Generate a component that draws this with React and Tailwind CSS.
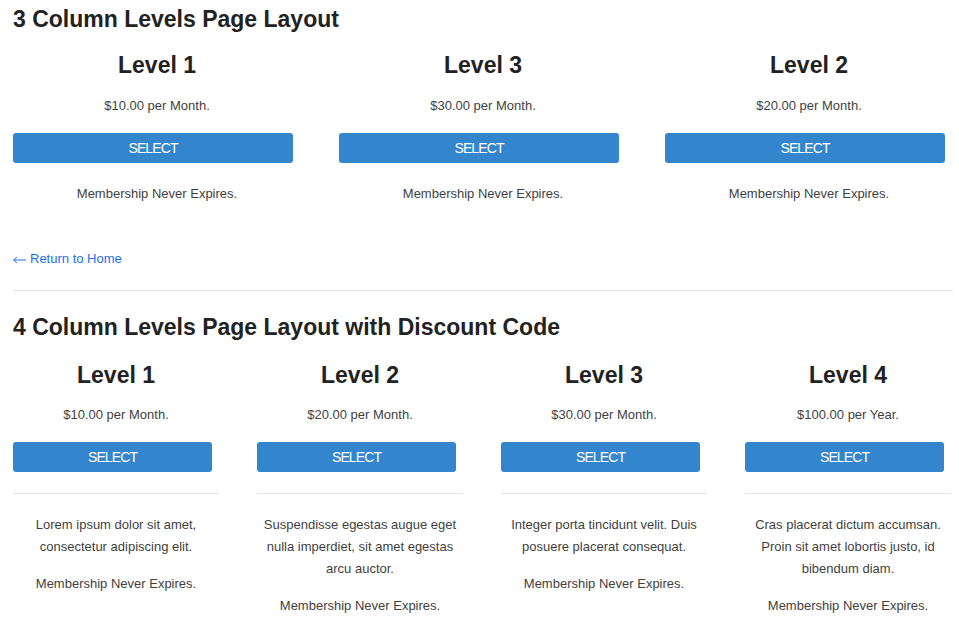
import React from 'react';

const threeCol = [
  { name: 'Level 1', price: '$10.00 per Month.' },
  { name: 'Level 3', price: '$30.00 per Month.' },
  { name: 'Level 2', price: '$20.00 per Month.' },
];

const fourCol = [
  { name: 'Level 1', price: '$10.00 per Month.', desc: ['Lorem ipsum dolor sit amet,', 'consectetur adipiscing elit.'] },
  { name: 'Level 2', price: '$20.00 per Month.', desc: ['Suspendisse egestas augue eget', 'nulla imperdiet, sit amet egestas', 'arcu auctor.'] },
  { name: 'Level 3', price: '$30.00 per Month.', desc: ['Integer porta tincidunt velit. Duis', 'posuere placerat consequat.'] },
  { name: 'Level 4', price: '$100.00 per Year.', desc: ['Cras placerat dictum accumsan.', 'Proin sit amet lobortis justo, id', 'bibendum diam.'] },
];

const SelectButton = ({ className = '' }) => (
  <button type="button" className={`h-[30px] rounded-[3px] bg-[#3386cd] text-[14px] tracking-[-0.9px] text-white ${className}`}>SELECT</button>
);

const App = () => (
  <div className="min-h-screen bg-white pl-[13px] text-[#3f3f3f] font-['Liberation_Sans',Arial,sans-serif]">
    <div className="w-[940px]">
      <h1 className="pt-[5px] text-[23px] font-bold leading-[28px] text-[#222]">3 Column Levels Page Layout</h1>

      <div className="mt-[18px] flex gap-[38px]">
        {threeCol.map((level) => (
          <div key={level.name} className="flex w-[288px] flex-col items-center text-center">
            <h2 className="text-[23px] font-bold leading-[28px] text-[#222]">{level.name}</h2>
            <p className="mt-[17px] text-[13px] leading-[20px]">{level.price}</p>
            <SelectButton className="mt-[17px] w-[280px] self-start" />
            <p className="mt-[21px] text-[13px] leading-[20px]">Membership Never Expires.</p>
          </div>
        ))}
      </div>

      <a href="#" className="mt-[45px] flex items-center gap-[4px] text-[13px] leading-[20px] text-[#2370ee]">
        <svg width="13" height="8" viewBox="0 0 13 8" fill="none" stroke="currentColor" strokeWidth="1" className="mt-[1px]">
          <path d="M0.5 4H13" />
          <path d="M4 0.8L0.8 4L4 7.2" />
        </svg>
        <span>Return to Home</span>
      </a>

      <div className="mt-[21px] h-px bg-[#e5e5e5]" />

      <h1 className="mt-[22px] text-[23px] font-bold leading-[28px] text-[#222]">4 Column Levels Page Layout with Discount Code</h1>

      <div className="mt-[20px] flex gap-[38px]">
        {fourCol.map((level) => (
          <div key={level.name} className="flex w-[206px] flex-col items-center text-center">
            <h2 className="text-[23px] font-bold leading-[28px] text-[#222]">{level.name}</h2>
            <p className="mt-[16px] text-[13px] leading-[20px]">{level.price}</p>
            <SelectButton className="mt-[17px] w-[199px] self-start" />
            <div className="mt-[21px] h-px w-full bg-[#e5e5e5]" />
            <p className="mt-[20px] text-[13px] leading-[22px]">
              {level.desc.map((line, i) => (
                <React.Fragment key={line}>
                  {i > 0 && <br />}
                  {line}
                </React.Fragment>
              ))}
            </p>
            <p className="mt-[15px] text-[13px] leading-[22px]">Membership Never Expires.</p>
          </div>
        ))}
      </div>
    </div>
  </div>
);

export default App;
